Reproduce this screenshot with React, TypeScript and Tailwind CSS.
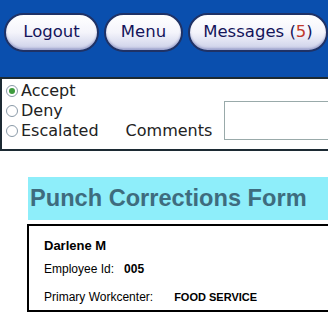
import React from 'react';

const NavButton: React.FC<{ children: React.ReactNode; className?: string }> = ({ children, className }) => (
  <button
    className={`h-[39px] rounded-full border-2 border-[#1f3266] bg-gradient-to-b from-white via-[#f4f4fb] to-[#cbcfe8] text-[16.5px] text-[#14145a] shadow-[inset_0_-2px_2px_rgba(80,90,160,0.35)] ${className ?? ''}`}
    style={{ fontFamily: '"DejaVu Sans", Verdana, sans-serif' }}
  >
    {children}
  </button>
);

const Radio: React.FC<{ label: string; checked?: boolean }> = ({ label, checked }) => (
  <label className="flex items-center gap-[3px] h-[20px] leading-[20px]">
    <span className="w-[12px] h-[12px] rounded-full border border-[#8a9aa8] bg-white flex items-center justify-center">
      {checked && <span className="w-[6px] h-[6px] rounded-full bg-[#3d9a3d]" />}
    </span>
    <span>{label}</span>
  </label>
);

export default function App() {
  return (
    <div className="w-[328px] h-[316px] overflow-hidden bg-white" style={{ fontFamily: '"Liberation Sans", Arial, sans-serif' }}>
      {/* top bar */}
      <div className="h-[77px] bg-[#0a4fae] flex items-start gap-[5px] pl-[4px] pt-[13px] overflow-hidden">
        <NavButton className="w-[95px] shrink-0">Logout</NavButton>
        <NavButton className="w-[79px] shrink-0">Menu</NavButton>
        <NavButton className="w-[140px] shrink-0">
          Messages (<span className="text-[#c0392b]">5</span>)
        </NavButton>
      </div>

      {/* decision row */}
      <div
        className="h-[74px] border-t-2 border-l-2 border-b-2 border-[#1c2a33] flex items-start pl-[4px] pt-[2px] text-[16px] leading-[20px] text-[#222]"
        style={{ fontFamily: '"DejaVu Sans", Verdana, sans-serif' }}
      >
        <div className="flex flex-col">
          <Radio label="Accept" checked />
          <Radio label="Deny" />
          <div className="flex items-center h-[20px]">
            <Radio label="Escalated" />
            <span className="ml-[27px]">Comments</span>
          </div>
        </div>
        <div className="ml-[12px] mt-[20px] h-[39px] flex-1 border border-[#9aa] border-r-0" />
      </div>

      {/* form */}
      <div className="pl-[27px] pt-[26px]">
        <div className="h-[43px] bg-[#8eeefa] flex items-center pl-[2px] ml-[1px]">
          <span className="text-[23.6px] font-bold text-[#3e6c7e]">Punch Corrections Form</span>
        </div>
        <div className="mt-[4px] h-[88px] border-2 border-r-0 border-black pl-[15px] pt-[10px] text-[12px] text-black">
          <div className="font-bold text-[13px] h-[20px] flex items-center">Darlene M</div>
          <div className="h-[26px] flex items-center">
            Employee Id:<span className="font-bold ml-[10px]">005</span>
          </div>
          <div className="h-[28px] flex items-center pt-[2px]">
            Primary Workcenter:<span className="font-bold text-[11px] ml-[21px]">FOOD SERVICE</span>
          </div>
        </div>
      </div>
    </div>
  );
}
